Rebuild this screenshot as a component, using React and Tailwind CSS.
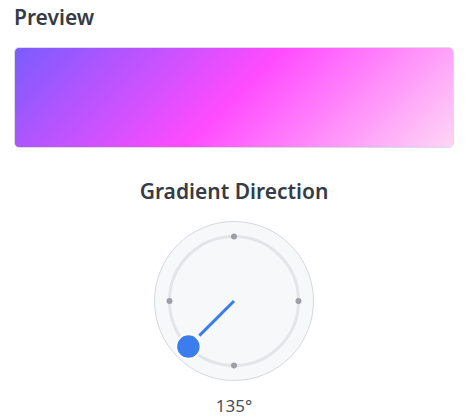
import { useState } from 'react';

const TICKS = [0, 90, 180, 270];

function AngleDial({ angle }) {
  // knob rides on the inner track, handle points from the centre to it
  const rad = (angle * Math.PI) / 180;
  const cx = 80;
  const cy = 80;
  const track = 64.5;
  const knob = { x: cx + Math.cos(rad) * track, y: cy + Math.sin(rad) * track };
  const tip = { x: cx + Math.cos(rad) * 49, y: cy + Math.sin(rad) * 49 };

  return (
    <div className="relative h-[160px] w-[160px] rounded-full border border-[#d6d9de] bg-[#f7f8fa]">
      <svg width="160" height="160" viewBox="0 0 160 160" className="absolute -left-px -top-px">
        <circle cx={cx} cy={cy} r={track} fill="none" stroke="#e3e5e9" strokeWidth="3" />
        {TICKS.map((t) => {
          const a = (t * Math.PI) / 180;
          return (
            <circle
              key={t}
              cx={cx + Math.cos(a) * track}
              cy={cy + Math.sin(a) * track}
              r="3"
              fill="#9ca0a8"
            />
          );
        })}
        <line x1={cx} y1={cy} x2={tip.x} y2={tip.y} stroke="#3b7ded" strokeWidth="3" />
        <circle cx={knob.x} cy={knob.y} r="12" fill="#3b7ded" stroke="#ffffff" strokeWidth="1.5" />
      </svg>
    </div>
  );
}

export default function App() {
  const [angle] = useState(135);

  return (
    <div
      className="w-[474px] bg-white px-[14px] pt-[3px]"
      style={{ fontFamily: '"Noto Sans", "Open Sans", sans-serif' }}
    >
      <h2 className="text-[21px] leading-[28px] font-semibold text-[#363c47]">Preview</h2>
      <div
        className="mt-[16px] h-[101px] w-[440px] rounded-[5px] border border-[#dcdde3]"
        style={{ background: `linear-gradient(${angle}deg, #7b5cff 0%, #ff4bff 50%, #ffd6f6 100%)` }}
      />

      <div className="mt-[29px] flex w-[440px] flex-col items-center">
        <h3 className="text-[21px] leading-[28px] font-semibold text-[#363c47]">Gradient Direction</h3>
        <div className="mt-[16px]">
          <AngleDial angle={angle} />
        </div>
        <p className="mt-[15px] text-[17px] leading-[20px] text-[#4b4f57]">{angle}°</p>
      </div>
    </div>
  );
}
